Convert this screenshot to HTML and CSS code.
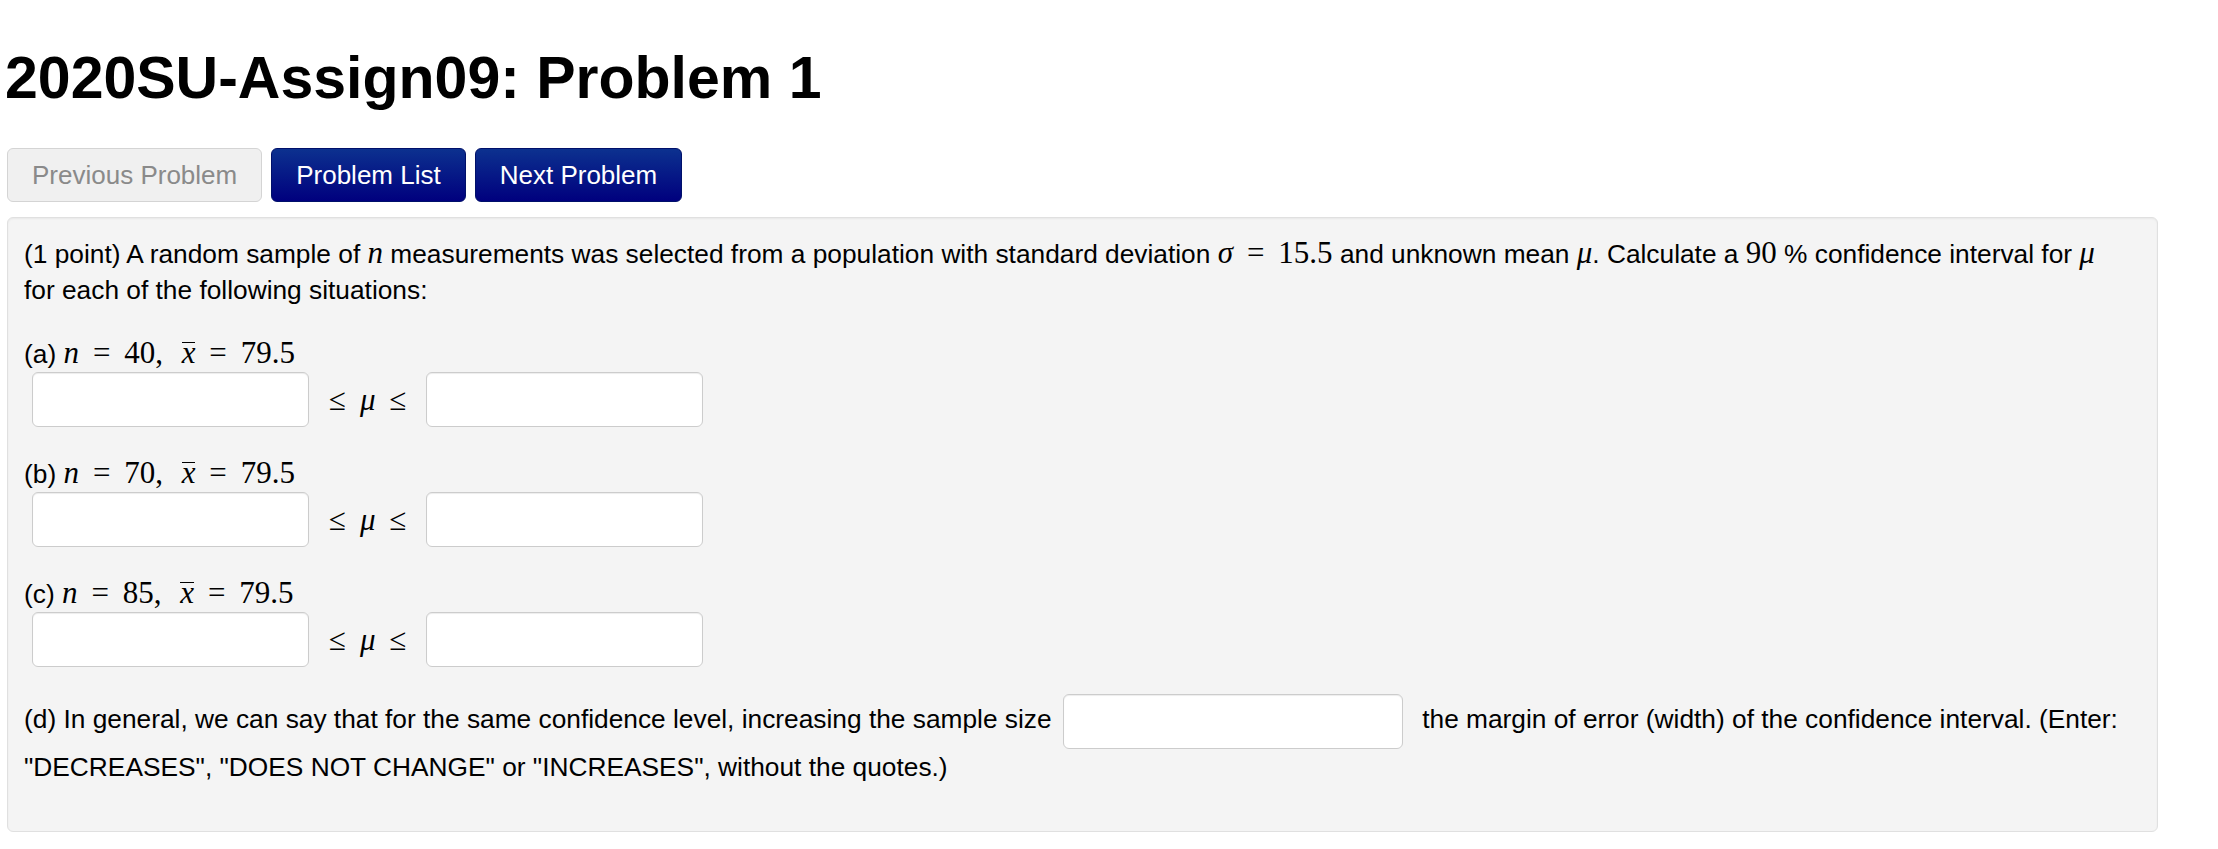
FILE: index.html
```html
<!DOCTYPE html>
<html lang="en">
<head>
    <meta charset="UTF-8">
    <title>2020SU-Assign09: Problem 1</title>
    <link rel="stylesheet" href="styles.css">
</head>
<body>
    <h1 class="problem-title">2020SU-Assign09: Problem 1</h1>

    <div class="nav">
        <span class="btn btn-disabled">Previous Problem</span>
        <a class="btn btn-primary" href="#">Problem List</a>
        <a class="btn btn-primary" href="#">Next Problem</a>
    </div>

    <div class="problem">
        <p class="intro">(1 point) A random sample of <span class="m"><i>n</i></span> measurements was selected from a population with standard deviation <span class="m"><i>σ</i><span class="op">=</span>15.5</span> and unknown mean <span class="m"><i>μ</i></span>. Calculate a <span class="m">90</span> % confidence interval for <span class="m"><i>μ</i></span><br>for each of the following situations:</p>

        <div class="part">
            <div class="part-label">(a) <span class="m"><i>n</i><span class="op">=</span>40,<span class="sp"></span><i class="bar">x</i><span class="op">=</span>79.5</span></div>
            <div class="answer-row">
                <input class="answer" type="text">
                <span class="m between">≤<i class="mu">μ</i>≤</span>
                <input class="answer" type="text">
            </div>
        </div>

        <div class="part">
            <div class="part-label">(b) <span class="m"><i>n</i><span class="op">=</span>70,<span class="sp"></span><i class="bar">x</i><span class="op">=</span>79.5</span></div>
            <div class="answer-row">
                <input class="answer" type="text">
                <span class="m between">≤<i class="mu">μ</i>≤</span>
                <input class="answer" type="text">
            </div>
        </div>

        <div class="part">
            <div class="part-label">(c) <span class="m"><i>n</i><span class="op">=</span>85,<span class="sp"></span><i class="bar">x</i><span class="op">=</span>79.5</span></div>
            <div class="answer-row">
                <input class="answer" type="text">
                <span class="m between">≤<i class="mu">μ</i>≤</span>
                <input class="answer" type="text">
            </div>
        </div>

        <p class="part-d">(d) In general, we can say that for the same confidence level, increasing the sample size <input class="answer answer-wide" type="text"> the margin of error (width) of the confidence interval. (Enter: "DECREASES", "DOES NOT CHANGE" or "INCREASES", without the quotes.)</p>
    </div>
</body>
</html>
```

FILE: styles.css
```css
body {
    margin: 0;
    padding: 46px 0 0 7px;
    font-family: "Liberation Sans", Arial, sans-serif;
    color: #000000;
    background: #ffffff;
}

.problem-title {
    margin: 0 0 0 -2px;
    font-size: 59px;
    line-height: 64px;
    font-weight: bold;
}

.nav {
    display: flex;
    gap: 9px;
    margin-top: 38px;
}

.btn {
    display: inline-flex;
    align-items: center;
    box-sizing: border-box;
    height: 54px;
    padding: 0 24px;
    border: 1.5px solid #d4d4d4;
    border-radius: 6px;
    font-size: 26px;
    text-decoration: none;
}

.btn-disabled {
    background: #f0f0f0;
    color: #8a8a8a;
}

.btn-primary {
    background: linear-gradient(#0c318f, #00007e);
    border-color: #00106a;
    color: #ffffff;
}

.problem {
    box-sizing: border-box;
    width: 2151px;
    margin-top: 15px;
    padding: 18px 16px 46px 16px;
    background: #f4f4f4;
    border: 1.5px solid #e0e0e0;
    border-radius: 6px;
    box-shadow: inset 0 1px 2px rgba(0, 0, 0, 0.05);
    font-size: 26.3px;
    line-height: 36px;
}

.problem p {
    margin: 0;
}

.m {
    font-family: "Liberation Serif", "Times New Roman", serif;
    font-size: 31px;
    line-height: 30px;
}

.m i {
    font-style: italic;
}

.op {
    margin: 0 0.45em;
}

.sp {
    display: inline-block;
    width: 0.6em;
}

.bar {
    display: inline-block;
    line-height: 0.6em;
    border-top: 1.5px solid #000000;
    padding-top: 1px;
}

.part {
    margin-top: 29px;
}

.part:first-of-type {
    margin-top: 28px;
}

.answer-row {
    display: flex;
    align-items: center;
    gap: 20px;
    padding-left: 8px;
}

.answer {
    box-sizing: border-box;
    width: 277px;
    height: 55px;
    margin: 0;
    padding: 6px 9px;
    background: #ffffff;
    border: 1.5px solid #cccccc;
    border-radius: 6px;
    box-shadow: inset 0 1px 1px rgba(0, 0, 0, 0.075);
    font-size: 21px;
}

.between {
    display: flex;
    align-items: center;
}

.mu {
    margin: 0 0.45em;
}

.part-d {
    margin-top: 27px !important;
}

.answer-wide {
    width: 340px;
    margin: 0 12px 0 4px;
    vertical-align: middle;
}
```
